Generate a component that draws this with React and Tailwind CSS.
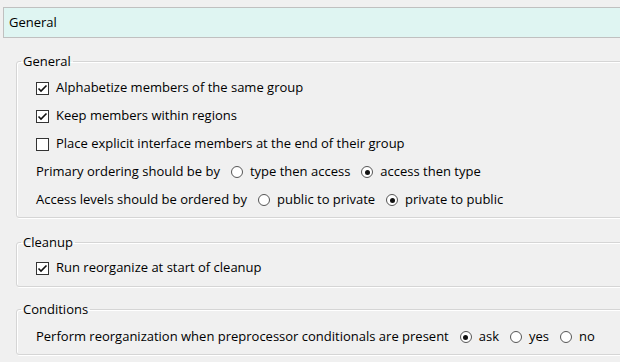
import React from "react";

function Check({ checked }) {
  return (
    <span className="w-[13px] h-[13px] border border-[#333] bg-white flex items-center justify-center shrink-0">
      {checked && (
        <svg width="11" height="11" viewBox="0 0 11 11">
          <path d="M1.5 5.5 L4 8 L9.5 2.5" fill="none" stroke="#111" strokeWidth="1.6" />
        </svg>
      )}
    </span>
  );
}

function CheckRow({ checked, label }) {
  return (
    <div className="h-[28px] flex items-center gap-[7px]">
      <Check checked={checked} />
      <span>{label}</span>
    </div>
  );
}

function Radio({ checked, label }) {
  return (
    <span className="flex items-center gap-[7px]">
      <span className="w-[12px] h-[12px] rounded-full border border-[#555] bg-white flex items-center justify-center shrink-0">
        {checked && <span className="w-[5px] h-[5px] rounded-full bg-[#111]" />}
      </span>
      <span>{label}</span>
    </span>
  );
}

function RadioRow({ label, options }) {
  return (
    <div className="h-[28px] flex items-center gap-[11px]">
      <span>{label}</span>
      {options.map((o) => (
        <Radio key={o.label} checked={o.checked} label={o.label} />
      ))}
    </div>
  );
}

function Group({ title, children, className }) {
  return (
    <fieldset
      className={
        "ml-[16px] -mr-[20px] border border-[#d5d5d5] rounded-[3px] pl-[19px] shadow-[inset_1px_1px_0_#fff,1px_1px_0_#fff] " +
        className
      }
    >
      <legend className="-ml-[15px] px-[2px] h-[16px] leading-[16px]">{title}</legend>
      {children}
    </fieldset>
  );
}

export default function App() {
  return (
    <div
      className="w-[620px] h-[362px] bg-[#f0f0f0] overflow-hidden text-[13px] text-black pt-[7px]"
      style={{ fontFamily: '"Open Sans", "Noto Sans", sans-serif' }}
    >
      <div className="ml-[3px] -mr-[10px] h-[31px] border border-[#c0c0c0] bg-[#dff5f2] flex items-center pl-[5px]">
        General
      </div>
      <Group title="General" className="mt-[15px] pt-[5px] pb-[3px]">
        <CheckRow checked label="Alphabetize members of the same group" />
        <CheckRow checked label="Keep members within regions" />
        <CheckRow label="Place explicit interface members at the end of their group" />
        <RadioRow
          label="Primary ordering should be by"
          options={[
            { label: "type then access" },
            { label: "access then type", checked: true },
          ]}
        />
        <RadioRow
          label="Access levels should be ordered by"
          options={[
            { label: "public to private" },
            { label: "private to public", checked: true },
          ]}
        />
      </Group>
      <Group title="Cleanup" className="mt-[16px] pt-[4px] pb-[4px]">
        <CheckRow checked label="Run reorganize at start of cleanup" />
      </Group>
      <Group title="Conditions" className="mt-[14px] pt-[6px] pb-[3px]">
        <RadioRow
          label="Perform reorganization when preprocessor conditionals are present"
          options={[
            { label: "ask", checked: true },
            { label: "yes" },
            { label: "no" },
          ]}
        />
      </Group>
    </div>
  );
}
